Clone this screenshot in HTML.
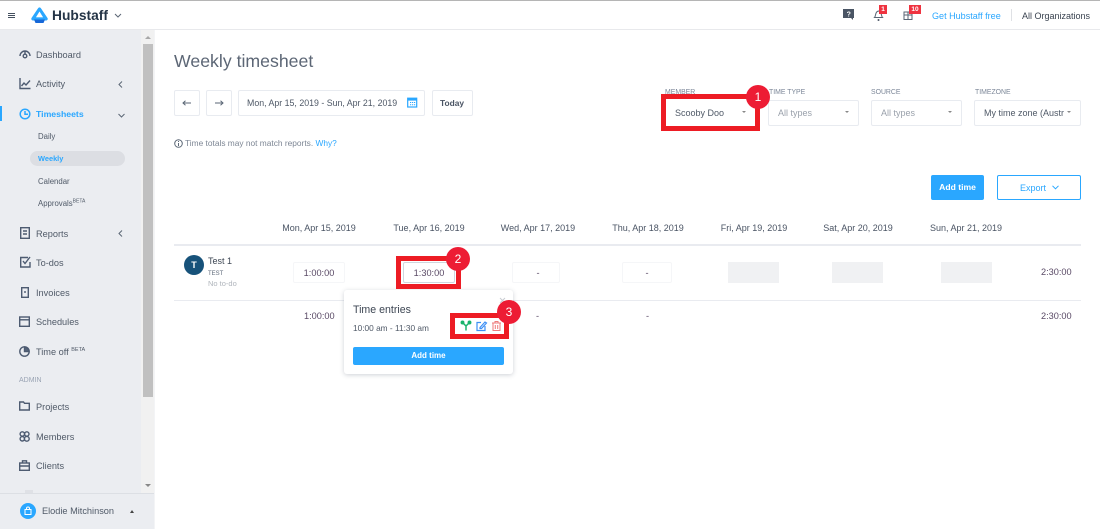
<!DOCTYPE html>
<html><head><meta charset="utf-8"><style>
html,body{margin:0;padding:0;background:#fff}
body{width:1100px;height:529px;overflow:hidden;position:relative;font-family:"Liberation Sans",sans-serif;color:#4a5464}
.a,.t{position:absolute}
.t{white-space:nowrap;line-height:14px;margin-top:1px}
.nav{font-size:9.2px;color:#505a68;left:36px}
.sub{font-size:7.8px;color:#505a68;left:38px}
svg{position:absolute;overflow:visible}
.ic{fill:none;stroke:#4d5b71;stroke-width:1.4}
.box{position:absolute;box-sizing:border-box;background:#fff;border:1px solid #e8ebf0;border-radius:2px}
.lab{font-size:6.9px;color:#7c8798}
.day{font-size:9px;color:#4a5464;font-weight:400;text-align:center;width:110px}
.tm{font-size:9.2px;color:#5a4a66;text-align:center}
.car{position:absolute;width:0;height:0;border-left:2.5px solid transparent;border-right:2.5px solid transparent;border-top:2.5px solid #888}
.red{position:absolute;box-sizing:border-box;border:5px solid #ed1c24}
.num{position:absolute;width:24px;height:24px;border-radius:50%;background:#ed1c34;color:#fff;font-size:12px;font-weight:400;text-align:center;line-height:24px}
.gr{position:absolute;background:#f0f1f3;height:21px;width:51px;top:262px}
</style></head><body>
<!-- top bar -->
<div class="a" style="left:0;top:0;width:1100px;height:1px;background:#b5b5b5"></div>
<div class="a" style="left:0;top:29px;width:1100px;height:1px;background:#e8e9ec"></div>
<div class="a" style="left:8px;top:13px;width:7px;height:1px;background:#44505f;box-shadow:0 2px 0 #44505f,0 4px 0 #44505f"></div>
<svg style="left:31px;top:7px" width="17" height="16" viewBox="0 0 17 16"><path d="M8.5 2.2 L15 11.8 L2 11.8 Z" fill="#fff" stroke="#2aa7ff" stroke-width="3.4" stroke-linejoin="round"/><path d="M3 12.5 H14 L12.5 16 H4.5 Z" fill="#1668d8"/><path d="M8.5 4.5 L12 10.2 L5 10.2 Z" fill="#fff"/></svg>
<div class="t" style="left:52px;top:7px;font-size:13.8px;font-weight:700;color:#243446;line-height:16px">Hubstaff</div>
<svg style="left:114px;top:13px" width="8" height="5"><path d="M1 1 L4 4 L7 1" fill="none" stroke="#5b6675"/></svg>
<!-- top right -->
<svg style="left:843px;top:9px" width="11" height="11"><path d="M0 0H11V9H10V11L8 9H0Z" fill="#4a5564"/><text x="3.6" y="7.5" font-size="7" font-weight="700" fill="#fff" font-family="Liberation Sans">?</text></svg>
<svg style="left:873px;top:8px" width="11" height="13"><path d="M1.5 9.5 C3 8 2 3.5 5.5 3 C9 3.5 8 8 9.5 9.5Z" fill="none" stroke="#5a6675"/><circle cx="5.5" cy="12" r="1" fill="#4a5564"/></svg>
<div class="a" style="left:879px;top:5px;width:8px;height:9px;background:#ef3340;color:#fff;font-size:6.5px;font-weight:700;text-align:center;line-height:9px">1</div>
<svg style="left:903px;top:10px" width="10" height="10"><rect x="1" y="2" width="8" height="7.5" fill="none" stroke="#5a6675"/><path d="M1 5H9M5 2V9.5" stroke="#5a6675"/></svg>
<div class="a" style="left:909px;top:5px;width:12px;height:9px;background:#ef3340;color:#fff;font-size:6.5px;font-weight:700;text-align:center;line-height:9px">10</div>
<div class="t" style="left:932px;top:8px;font-size:9.05px;color:#2aa7ff">Get Hubstaff free</div>
<div class="a" style="left:1011px;top:9px;width:1px;height:12px;background:#dfe1e5"></div>
<div class="t" style="left:1022px;top:8px;font-size:9px;color:#3a4350">All Organizations</div>

<!-- sidebar -->
<div class="a" style="left:0;top:30px;width:141px;height:499px;background:#ebedf1"></div>
<div class="a" style="left:141px;top:30px;width:13px;height:463px;background:#f1f1f1"></div>
<div class="a" style="left:143px;top:44px;width:10px;height:353px;background:#c0c0c0"></div>
<div class="a" style="left:145px;top:36px;width:0;height:0;border-left:3px solid transparent;border-right:3px solid transparent;border-bottom:3px solid #a8a8a8"></div>
<div class="a" style="left:145px;top:484px;width:0;height:0;border-left:3px solid transparent;border-right:3px solid transparent;border-top:3px solid #888"></div>
<div class="a" style="left:0;top:493px;width:155px;height:36px;background:#ebedf1;border-top:1px solid #dcdfe4;box-sizing:border-box"></div>
<div class="a" style="left:154px;top:30px;width:1px;height:499px;background:#f3f4f6"></div>

<svg style="left:19px;top:48px" width="12" height="12" class="ic"><path d="M1 8 A5 5 0 1 1 11 8"/><circle cx="6" cy="8" r="1.8"/><path d="M6 3V6"/></svg>
<div class="t nav" style="top:47px">Dashboard</div>
<svg style="left:19px;top:78px" width="12" height="12" class="ic"><path d="M1 0V10.5H11.5M2.5 8L5 5L7 7L11 2.5"/></svg>
<div class="t nav" style="top:76px">Activity</div>
<svg style="left:118px;top:81px" width="5" height="7"><path d="M4 0.5L1 3.5L4 6.5" fill="none" stroke="#5b6675"/></svg>
<div class="a" style="left:0;top:106px;width:2px;height:15px;background:#2aa7ff"></div>
<svg style="left:19px;top:108px" width="12" height="12" fill="none" stroke="#2aa7ff" stroke-width="1.5"><circle cx="6" cy="6" r="4.8"/><path d="M6 3V6.3H9"/></svg>
<div class="t nav" style="top:106px;color:#2aa7ff;font-weight:700;font-size:8.7px">Timesheets</div>
<svg style="left:118px;top:113px" width="7" height="5"><path d="M0.5 1L3.5 4L6.5 1" fill="none" stroke="#5b6675"/></svg>
<div class="t sub" style="top:129px">Daily</div>
<div class="a" style="left:30px;top:151px;width:95px;height:15px;border-radius:8px;background:#dcdee3"></div>
<div class="t sub" style="top:151px;color:#2aa7ff;font-weight:700;font-size:7.4px">Weekly</div>
<div class="t sub" style="top:174px">Calendar</div>
<div class="t sub" style="top:196px">Approvals<sup style="font-size:5px;line-height:0">BETA</sup></div>
<svg style="left:20px;top:227px" width="10" height="12" class="ic"><rect x="0.7" y="0.7" width="8.6" height="10.6"/><path d="M3 4H7M3 7H7"/></svg>
<div class="t nav" style="top:226px">Reports</div>
<svg style="left:118px;top:230px" width="5" height="7"><path d="M4 0.5L1 3.5L4 6.5" fill="none" stroke="#5b6675"/></svg>
<svg style="left:20px;top:256px" width="11" height="12" class="ic"><path d="M10 6V11H0.7V1.5H8M3 5L5 7.5L10 1"/></svg>
<div class="t nav" style="top:255px">To-dos</div>
<svg style="left:21px;top:287px" width="8" height="11" class="ic"><rect x="0.7" y="0.7" width="6.6" height="9.6"/><path d="M3 5H5"/></svg>
<div class="t nav" style="top:285px">Invoices</div>
<svg style="left:19px;top:316px" width="11" height="11" class="ic"><rect x="0.7" y="1" width="9.6" height="9.3"/><path d="M0.7 3.8H10.3"/></svg>
<div class="t nav" style="top:314px">Schedules</div>
<svg style="left:19px;top:346px" width="11" height="11" class="ic"><circle cx="5.5" cy="5.5" r="4.7"/><path d="M5.5 5.5V1A4.5 4.5 0 0 1 10 5.5Z" fill="#56647a"/></svg>
<div class="t nav" style="top:344px">Time off <sup style="font-size:5.5px;line-height:0">BETA</sup></div>
<div class="t" style="left:19px;top:373px;font-size:7px;color:#9aa4b4">ADMIN</div>
<svg style="left:19px;top:401px" width="11" height="10" class="ic"><path d="M0.7 1H4.5L5.5 2.3H10.3V9H0.7Z"/></svg>
<div class="t nav" style="top:399px">Projects</div>
<svg style="left:19px;top:431px" width="11" height="11" class="ic"><circle cx="3.3" cy="3" r="2.2"/><circle cx="7.8" cy="3" r="2.2"/><circle cx="3.3" cy="7.8" r="2.2"/><circle cx="7.8" cy="7.8" r="2.4"/></svg>
<div class="t nav" style="top:429px">Members</div>
<svg style="left:19px;top:460px" width="11" height="11" class="ic"><rect x="0.7" y="3" width="9.6" height="7.3"/><path d="M3.5 3V0.8H7.5V3M0.7 6H10.3"/></svg>
<div class="t nav" style="top:458px">Clients</div>
<div class="a" style="left:20px;top:490px;width:100px;height:3px;overflow:hidden"><div style="width:8px;height:3px;margin-left:5px;background:#dfe1e6"></div></div>
<div class="a" style="left:20px;top:503px;width:16px;height:16px;border-radius:50%;background:#2aa7ff"></div>
<svg style="left:24px;top:506px" width="8" height="9"><rect x="1" y="3.5" width="6" height="5" fill="none" stroke="#fff"/><path d="M2.5 3.5V2.5A1.5 1.5 0 0 1 5.5 2.5V3.5" fill="none" stroke="#fff"/></svg>
<div class="t" style="left:42px;top:503px;font-size:9.2px;color:#505a68">Elodie Mitchinson</div>
<div class="a" style="left:130px;top:510px;width:0;height:0;border-left:2.5px solid transparent;border-right:2.5px solid transparent;border-bottom:3px solid #444"></div>

<!-- header -->
<div class="t" style="left:174px;top:49px;font-size:17.7px;line-height:22px;color:#5c6675">Weekly timesheet</div>
<div class="box" style="left:174px;top:90px;width:26px;height:26px"></div>
<div class="box" style="left:206px;top:90px;width:26px;height:26px"></div>
<svg style="left:182px;top:100px" width="10" height="6"><path d="M9 3H1M3.5 0.8L1 3L3.5 5.2" fill="none" stroke="#5a6675"/></svg>
<svg style="left:214px;top:100px" width="10" height="6"><path d="M1 3H9M6.5 0.8L9 3L6.5 5.2" fill="none" stroke="#5a6675"/></svg>
<div class="box" style="left:238px;top:90px;width:187px;height:26px"></div>
<div class="t" style="left:247px;top:95px;font-size:8.8px;color:#4f5967">Mon, Apr 15, 2019 - Sun, Apr 21, 2019</div>
<svg style="left:407px;top:97px" width="11" height="11"><rect x="0.7" y="1.2" width="9" height="8.8" fill="none" stroke="#2aa7ff" stroke-width="1.2"/><rect x="0.7" y="1.2" width="9" height="2.4" fill="#2aa7ff"/><path d="M3 5.5H4.2M5 5.5H6.2M7 5.5H8.2M3 7.8H4.2M5 7.8H6.2M7 7.8H8.2" stroke="#2aa7ff"/></svg>
<div class="box" style="left:432px;top:90px;width:41px;height:26px"></div>
<div class="t" style="left:440px;top:95px;font-size:8.4px;font-weight:700;color:#4a5464">Today</div>
<svg style="left:174px;top:139px" width="9" height="9"><circle cx="4.5" cy="4.5" r="3.8" fill="none" stroke="#5a6675"/><path d="M4.5 4V7M4.5 2V3" stroke="#5a6675"/></svg>
<div class="t" style="left:185px;top:135px;font-size:8.35px;color:#7d8694">Time totals may not match reports. <span style="color:#2aa7ff">Why?</span></div>

<!-- filters -->
<div class="t lab" style="left:665px;top:85px">MEMBER</div>
<div class="t lab" style="left:769px;top:85px">TIME TYPE</div>
<div class="t lab" style="left:871px;top:85px">SOURCE</div>
<div class="t lab" style="left:975px;top:85px">TIMEZONE</div>
<div class="box" style="left:665px;top:100px;width:91px;height:26px;border:0"></div>
<div class="t" style="left:675px;top:105px;font-size:9px;color:#4f5967">Scooby Doo</div>
<div class="car" style="left:742px;top:111px"></div>
<div class="box" style="left:768px;top:100px;width:91px;height:26px"></div>
<div class="t" style="left:778px;top:105px;font-size:9px;color:#9aa1ab">All types</div>
<div class="car" style="left:845px;top:111px"></div>
<div class="box" style="left:871px;top:100px;width:91px;height:26px"></div>
<div class="t" style="left:881px;top:105px;font-size:9px;color:#9aa1ab">All types</div>
<div class="car" style="left:948px;top:111px"></div>
<div class="box" style="left:974px;top:100px;width:107px;height:26px"></div>
<div class="t" style="left:984px;top:105px;width:80px;overflow:hidden;font-size:9px;color:#4f5967">My time zone (Austra</div>
<div class="car" style="left:1067px;top:111px"></div>

<div class="a" style="left:931px;top:175px;width:53px;height:25px;background:#2aa7ff;border-radius:2px;color:#fff;font-size:8.6px;font-weight:700;text-align:center;line-height:25px">Add time</div>
<div class="a" style="left:997px;top:175px;width:84px;height:25px;box-sizing:border-box;border:1px solid #2aa7ff;border-radius:2px"></div>
<div class="t" style="left:1020px;top:180px;font-size:9px;color:#2aa7ff">Export</div>
<svg style="left:1052px;top:185px" width="7" height="5"><path d="M0.5 0.8L3.5 3.8L6.5 0.8" fill="none" stroke="#2aa7ff"/></svg>

<!-- table -->
<div class="t day" style="left:264px;top:220px">Mon, Apr 15, 2019</div>
<div class="t day" style="left:374px;top:220px">Tue, Apr 16, 2019</div>
<div class="t day" style="left:483px;top:220px">Wed, Apr 17, 2019</div>
<div class="t day" style="left:593px;top:220px">Thu, Apr 18, 2019</div>
<div class="t day" style="left:699px;top:220px">Fri, Apr 19, 2019</div>
<div class="t day" style="left:803px;top:220px">Sat, Apr 20, 2019</div>
<div class="t day" style="left:911px;top:220px">Sun, Apr 21, 2019</div>
<div class="a" style="left:174px;top:244px;width:907px;height:2px;background:#e9ebf0"></div>
<div class="a" style="left:174px;top:300px;width:907px;height:1px;background:#e9ebf0"></div>

<div class="a" style="left:184px;top:255px;width:20px;height:20px;border-radius:50%;background:#17527a;color:#fff;font-size:9px;font-weight:700;text-align:center;line-height:21px">T</div>
<div class="t" style="left:208px;top:253px;font-size:9px;color:#3d4653">Test 1</div>
<div class="t" style="left:208px;top:266px;font-size:6px;color:#5d6878">TEST</div>
<div class="t" style="left:208px;top:276px;font-size:7.5px;color:#b0b5bc">No to-do</div>

<div class="box" style="left:293px;top:262px;width:52px;height:21px;border-color:#f5f6f8"></div>
<div class="t tm" style="left:293px;top:265px;width:52px">1:00:00</div>
<div class="box" style="left:403px;top:262px;width:52px;height:21px;border-color:#cfd6de"></div>
<div class="t tm" style="left:403px;top:265px;width:52px">1:30:00</div>
<div class="box" style="left:512px;top:262px;width:48px;height:21px;border-color:#f5f6f8"></div>
<div class="t tm" style="left:512px;top:265px;width:52px">-</div>
<div class="box" style="left:622px;top:262px;width:50px;height:21px;border-color:#f5f6f8"></div>
<div class="t tm" style="left:622px;top:265px;width:50px">-</div>
<div class="gr" style="left:728px"></div>
<div class="gr" style="left:832px"></div>
<div class="gr" style="left:941px"></div>
<div class="t tm" style="left:1041px;top:264px">2:30:00</div>

<div class="t tm" style="left:304px;top:308px">1:00:00</div>
<div class="t tm" style="left:536px;top:308px">-</div>
<div class="t tm" style="left:646px;top:308px">-</div>
<div class="t tm" style="left:1041px;top:308px">2:30:00</div>

<!-- popover -->
<div class="a" style="left:344px;top:290px;width:169px;height:84px;background:#fff;border-radius:3px;box-shadow:0 1px 5px rgba(60,70,90,.25)"></div>
<svg style="left:499px;top:297px" width="7" height="7"><path d="M1 1L6 6M6 1L1 6" stroke="#c9ccd2"/></svg>
<div class="t" style="left:353px;top:302px;font-size:10.6px;color:#3d4653">Time entries</div>
<div class="t" style="left:353px;top:320px;font-size:8.3px;color:#4f5967">10:00 am - 11:30 am</div>
<div class="a" style="left:353px;top:347px;width:151px;height:18px;background:#2aa7ff;border-radius:2px;color:#fff;font-size:8px;font-weight:700;text-align:center;line-height:18px">Add time</div>

<svg style="left:461px;top:321px" width="10" height="10" fill="none" stroke="#19b36b" stroke-width="1.5"><path d="M5 9.5V5L1.5 1.5M5 5L8.5 1.5"/><circle cx="1.5" cy="1.5" r="1.2" fill="#19b36b"/><circle cx="8.5" cy="1.5" r="1.2" fill="#19b36b"/></svg>
<svg style="left:476px;top:321px" width="11" height="10" fill="none" stroke="#3d8ff5" stroke-width="1.2"><path d="M5 1.5H1V9.5H9V5M4 6.5L9 1L10.5 2L5.5 7.5L4 7.5Z"/></svg>
<svg style="left:492px;top:321px" width="9" height="10" fill="none" stroke="#ee7b7b"><path d="M0 2H9M3 2V0.5H6V2M1 2V9.5H8V2M3.3 4V8M5.7 4V8"/></svg>

<!-- annotations -->
<div class="red" style="left:661px;top:94px;width:99px;height:37px"></div>
<div class="red" style="left:396px;top:256px;width:65px;height:33px"></div>
<div class="red" style="left:450px;top:313px;width:59px;height:26px"></div>
<div class="num" style="left:746px;top:85px">1</div>
<div class="num" style="left:446px;top:247px">2</div>
<div class="num" style="left:497px;top:300px">3</div>
</body></html>
